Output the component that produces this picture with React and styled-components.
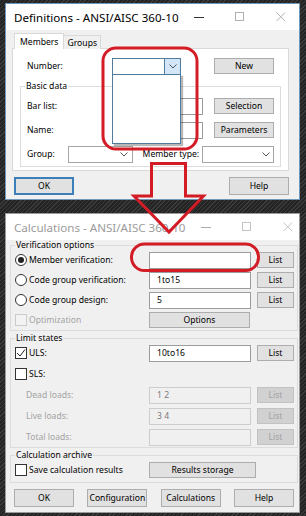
import React from 'react';
import styled, { createGlobalStyle } from 'styled-components';

const GlobalStyle = createGlobalStyle`
  html, body { margin: 0; padding: 0; }
  body {
    width: 306px;
    height: 516px;
    overflow: hidden;
    background: repeating-linear-gradient(135deg, #3b3b3b 0 1px, #242424 1px 3px);
    font-family: "Noto Sans", "Open Sans", sans-serif;
    font-size: 8.6px;
    color: #000;
  }
`;

const Page = styled.div`
  position: relative;
  width: 306px;
  height: 516px;
  box-sizing: border-box;
  padding: 3px 6px 0 5px;
  display: flex;
  flex-direction: column;
  gap: 13px;
`;

const Window = styled.div`
  width: 295px;
  height: ${p => p.$h}px;
  box-sizing: border-box;
  border: 1px solid ${p => (p.$active ? '#6f97bb' : '#9a9a9a')};
  background: #f0f0f0;
  display: flex;
  flex-direction: column;
`;

const TitleBar = styled.div`
  height: 26px;
  flex: none;
  background: #fff;
  display: flex;
  align-items: center;
  padding-left: 4px;
`;

const Title = styled.span`
  flex: 1;
  margin-left: 4px;
  font-size: 11.6px;
  color: ${p => (p.$dim ? '#9b9b9b' : '#000')};
  white-space: nowrap;
`;

const Controls = styled.div`
  display: flex;
`;

const Ctrl = styled.span`
  width: 41px;
  height: 26px;
  display: flex;
  align-items: center;
  justify-content: center;
`;

const AppIcon = () => (
  <svg width="15" height="13" viewBox="0 0 15 13">
    <rect x="0" y="1" width="3" height="11" fill="#1a1a1a" />
    <path d="M2 1 H14 V4 H10 V8 H14 V12 H2 V8 H6 V4 H2 Z" fill="#1a1a1a" />
    <path d="M3 2 H13 V3.5 H9 V8.5 H13 V11 H3 V8.5 H7 V3.5 H3 Z" fill="#e0141c" />
    <rect x="5" y="5" width="6" height="2" fill="#e0141c" />
  </svg>
);

const WinControls = ({ dim }) => (
  <Controls>
    <Ctrl>
      <svg width="10" height="10"><path d="M0 5.5 H10" stroke={dim ? '#aaa' : '#333'} /></svg>
    </Ctrl>
    <Ctrl>
      <svg width="10" height="10"><rect x="0.5" y="0.5" width="8" height="8" fill="none" stroke={dim ? '#c4c4c4' : '#b0b0b0'} /></svg>
    </Ctrl>
    <Ctrl>
      <svg width="10" height="10"><path d="M0.5 0.5 L9 9 M9 0.5 L0.5 9" stroke={dim ? '#c4c4c4' : '#b0b0b0'} /></svg>
    </Ctrl>
  </Controls>
);

/* ---------- common controls ---------- */

const Btn = styled.div`
  width: ${p => p.$w}px;
  height: ${p => p.$h || 16}px;
  box-sizing: border-box;
  display: flex;
  align-items: center;
  justify-content: center;
  background: ${p => (p.$off ? '#d1d1d1' : '#e1e1e1')};
  border: 1px solid ${p => (p.$focus ? '#3d7fb8' : p.$off ? '#c2c2c2' : '#adadad')};
  box-shadow: ${p => (p.$focus ? 'inset 0 0 0 1px #3d7fb8' : 'none')};
  color: ${p => (p.$off ? '#a2a2a2' : '#000')};
  justify-self: ${p => (p.$end ? 'end' : 'start')};
  white-space: nowrap;
`;

const Field = styled.div`
  height: 17px;
  box-sizing: border-box;
  width: ${p => (p.$w ? `${p.$w}px` : '100%')};
  border: 1px solid ${p => (p.$off ? '#cdcdcd' : '#9c9c9c')};
  background: ${p => (p.$off ? '#f0f0f0' : '#fff')};
  color: ${p => (p.$off ? '#7a7a7a' : '#000')};
  padding-left: 7px;
  display: flex;
  align-items: center;
`;

const Combo = styled.div`
  position: relative;
  width: ${p => p.$w}px;
  height: 17px;
  box-sizing: border-box;
  border: 1px solid ${p => (p.$open ? '#4f7b9d' : '#a6a6a6')};
  background: #fff;
  display: flex;
  justify-content: flex-end;
`;

const ComboArrow = styled.div`
  width: 15px;
  height: 100%;
  display: flex;
  align-items: center;
  justify-content: center;
  background: ${p => (p.$hot ? '#d3e6f7' : 'transparent')};
  border-left: 1px solid ${p => (p.$hot ? '#4f7b9d' : 'transparent')};
`;

const DropList = styled.div`
  position: absolute;
  top: 15px;
  left: -1px;
  width: 69px;
  height: 70px;
  box-sizing: border-box;
  border: 1px solid #4f7b9d;
  background: #fff;
  box-shadow: 2px 2px 1px rgba(0, 0, 0, 0.28);
  z-index: 2;
`;

const Chevron = () => (
  <svg width="8" height="5" viewBox="0 0 8 5">
    <path d="M0.5 0.5 L4 4 L7.5 0.5" fill="none" stroke="#555" />
  </svg>
);

const Label = styled.span`
  color: ${p => (p.$off ? '#a3a3a3' : '#000')};
  padding-left: ${p => p.$indent || 0}px;
  width: ${p => (p.$w ? `${p.$w}px` : 'auto')};
  margin-left: ${p => p.$ml || 0}px;
  flex: none;
  white-space: nowrap;
`;

const Opt = styled.span`
  display: flex;
  align-items: center;
  gap: 2px;
  color: ${p => (p.$off ? '#a3a3a3' : '#000')};
  white-space: nowrap;
`;

const RadioDot = styled.span`
  width: 12px;
  height: 12px;
  box-sizing: border-box;
  border-radius: 50%;
  border: 1px solid #333;
  background: #fff;
  display: flex;
  align-items: center;
  justify-content: center;
  &::after {
    content: '';
    width: 6px;
    height: 6px;
    border-radius: 50%;
    background: #222;
    display: ${p => (p.$on ? 'block' : 'none')};
  }
`;

const Box = styled.span`
  width: 12px;
  height: 12px;
  box-sizing: border-box;
  border: 1px solid ${p => (p.$off ? '#cccccc' : '#333')};
  background: ${p => (p.$off ? '#f3f3f3' : '#fff')};
  display: flex;
  align-items: center;
  justify-content: center;
`;

const Check = ({ on, off }) => (
  <Box $off={off}>
    {on && (
      <svg width="10" height="10" viewBox="0 0 10 10">
        <path d="M1 5 L4 8 L9 1.5" fill="none" stroke="#222" strokeWidth="1" />
      </svg>
    )}
  </Box>
);

const Group = styled.fieldset`
  margin: ${p => p.$m || '0'};
  padding: ${p => p.$pad || '0 2px 0 4px'};
  border: 1px solid #dcdcdc;
  min-inline-size: 0;
`;

const Legend = styled.legend`
  padding: 0 1px;
  margin-left: ${p => p.$ml || 0}px;
  font-size: 8.6px;
  line-height: 10px;
  white-space: nowrap;
`;

/* ---------- Definitions window ---------- */

const DefBody = styled.div`
  flex: 1;
  display: flex;
  flex-direction: column;
  padding: 3px 10px 4px 6px;
`;

const Tabs = styled.div`
  height: 16px;
  display: flex;
  align-items: flex-end;
  padding-left: 2px;
`;

const Tab = styled.div`
  position: relative;
  z-index: ${p => (p.$active ? 1 : 0)};
  height: ${p => (p.$active ? 16 : 14)}px;
  padding: 0 ${p => (p.$active ? 5 : 3)}px;
  box-sizing: border-box;
  display: flex;
  align-items: center;
  background: ${p => (p.$active ? '#fff' : '#f0f0f0')};
  border: 1px solid #d9d9d9;
  border-bottom: none;
  margin-left: ${p => (p.$active ? 0 : -1)}px;
`;

const TabPanel = styled.div`
  margin-top: -1px;
  height: 123px;
  box-sizing: border-box;
  background: #fff;
  border: 1px solid #d9d9d9;
  padding: 8px 7px 0 7px;
`;

const NumberRow = styled.div`
  display: grid;
  grid-template-columns: 85px 69px 33px 60px;
  align-items: center;
  height: 18px;
  padding-left: 7px;
`;

const DefRows = styled.div`
  display: grid;
  grid-template-columns: 85px 91px 11px 60px;
  grid-auto-rows: 20px;
  row-gap: 4px;
  align-items: center;
  padding: 5px 0 2px 0;
`;

const ComboRow = styled.div`
  grid-column: 1 / -1;
  display: flex;
  align-items: center;
`;

const DefFooter = styled.div`
  margin-top: 6px;
  padding-left: 2px;
  display: flex;
  justify-content: space-between;
`;

/* ---------- Calculations window ---------- */

const CalcBody = styled.div`
  flex: 1;
  display: flex;
  flex-direction: column;
  padding: 0 1px 4px 4px;
`;

const CalcRows = styled.div`
  display: grid;
  grid-template-columns: 134px 102px 43px;
  grid-auto-rows: 20px;
  row-gap: ${p => p.$gap || 0}px;
  align-items: center;
`;

const Span2 = styled.div`
  grid-column: 2 / span 2;
`;

const CalcFooter = styled.div`
  margin-top: 6px;
  padding: 0 4px;
  display: flex;
  justify-content: space-between;
`;

const Annot = styled.svg`
  position: absolute;
  left: 0;
  top: 0;
  pointer-events: none;
  z-index: 5;
`;

const RED = '#d31c25';

export default function App() {
  return (
    <>
      <GlobalStyle />
      <Page>
        <Window $h={197} $active>
          <TitleBar>
            <AppIcon />
            <Title>Definitions - ANSI/AISC 360-10</Title>
            <WinControls />
          </TitleBar>
          <DefBody>
            <Tabs>
              <Tab $active>Members</Tab>
              <Tab>Groups</Tab>
            </Tabs>
            <TabPanel>
              <NumberRow>
                <Label>Number:</Label>
                <Combo $w={69} $open>
                  <ComboArrow $hot><Chevron /></ComboArrow>
                  <DropList />
                </Combo>
                <span />
                <Btn $w={60}>New</Btn>
              </NumberRow>
              <Group $m="6px 0 0 0" $pad="0 6px 0 6px">
                <Legend $ml={-2}>Basic data</Legend>
                <DefRows>
                  <Label>Bar list:</Label>
                  <Field />
                  <span />
                  <Btn $w={60}>Selection</Btn>
                  <Label>Name:</Label>
                  <Field />
                  <span />
                  <Btn $w={60}>Parameters</Btn>
                  <ComboRow>
                    <Label $w={41}>Group:</Label>
                    <Combo $w={66}><ComboArrow><Chevron /></ComboArrow></Combo>
                    <Label $w={59} $ml={10}>Member type:</Label>
                    <Combo $w={74}><ComboArrow><Chevron /></ComboArrow></Combo>
                  </ComboRow>
                </DefRows>
              </Group>
            </TabPanel>
            <DefFooter>
              <Btn $w={60} $h={18} $focus>OK</Btn>
              <Btn $w={60} $h={18}>Help</Btn>
            </DefFooter>
          </DefBody>
        </Window>

        <Window $h={300}>
          <TitleBar>
            <AppIcon />
            <Title $dim>Calculations - ANSI/AISC 360-10</Title>
            <WinControls dim />
          </TitleBar>
          <CalcBody>
            <Group>
              <Legend>Verification options</Legend>
              <CalcRows>
                <Opt><RadioDot $on />Member verification:</Opt>
                <Field />
                <Btn $w={37} $end>List</Btn>
                <Opt><RadioDot />Code group verification:</Opt>
                <Field>1to15</Field>
                <Btn $w={37} $end>List</Btn>
                <Opt><RadioDot />Code group design:</Opt>
                <Field>5</Field>
                <Btn $w={37} $end>List</Btn>
                <Opt $off><Check off />Optimization</Opt>
                <Btn $w={101}>Options</Btn>
                <span />
              </CalcRows>
            </Group>
            <Group $m="2px 0 0 0">
              <Legend>Limit states</Legend>
              <CalcRows $gap={1}>
                <Opt><Check on />ULS:</Opt>
                <Field>10to16</Field>
                <Btn $w={37} $end>List</Btn>
                <Opt><Check />SLS:</Opt>
                <span />
                <span />
                <Label $off $indent={11}>Dead loads:</Label>
                <Field $off>1 2</Field>
                <Btn $w={37} $end $off>List</Btn>
                <Label $off $indent={11}>Live loads:</Label>
                <Field $off>3 4</Field>
                <Btn $w={37} $end $off>List</Btn>
                <Label $off $indent={11}>Total loads:</Label>
                <Field $off />
                <Btn $w={37} $end $off>List</Btn>
              </CalcRows>
            </Group>
            <Group $m="2px 0 0 0" $pad="0 2px 2px 4px">
              <Legend>Calculation archive</Legend>
              <CalcRows>
                <Opt><Check />Save calculation results</Opt>
                <Span2><Btn $w={107}>Results storage</Btn></Span2>
              </CalcRows>
            </Group>
            <CalcFooter>
              <Btn $w={60} $h={18}>OK</Btn>
              <Btn $w={60} $h={18}>Configuration</Btn>
              <Btn $w={60} $h={18}>Calculations</Btn>
              <Btn $w={60} $h={18}>Help</Btn>
            </CalcFooter>
          </CalcBody>
        </Window>

        <Annot width="306" height="516" viewBox="0 0 306 516">
          <rect x="103" y="48" width="94" height="101" rx="13" fill="none" stroke={RED} strokeWidth="3" />
          <path d="M151.5 163.5 H185.5 V196 H203.5 L169 232 L134 196 H151.5 Z" fill="none" stroke={RED} strokeWidth="3" />
          <rect x="131.5" y="244" width="127" height="26.5" rx="13" fill="none" stroke={RED} strokeWidth="3" />
        </Annot>
      </Page>
    </>
  );
}
